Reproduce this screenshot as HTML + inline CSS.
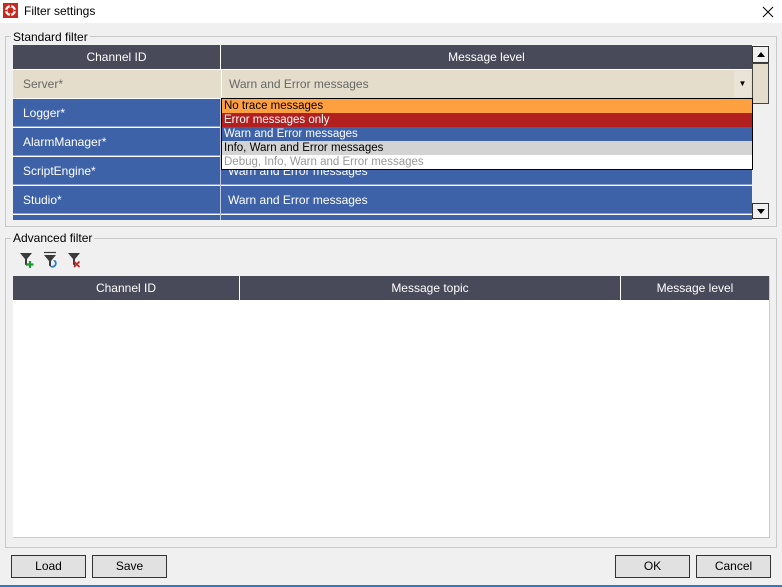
<!DOCTYPE html>
<html><head><meta charset="utf-8"><style>
*{margin:0;padding:0;box-sizing:border-box}
body{width:782px;height:587px;background:#f0f0f0;font-family:"Liberation Sans",sans-serif;font-size:12px;position:relative;overflow:hidden;color:#000}
.a{position:absolute}
.hd{background:#484a59;color:#fff;text-align:center;line-height:24px}
.row{position:absolute;left:13px;width:739px;height:28px;line-height:28px;color:#fff;background:#3e62a8;border-bottom:1px solid #8aa0cc}
.row span{position:absolute;padding-left:10px}
.btn{position:absolute;height:23px;background:#e1e1e1;border:1px solid #333;text-align:center;line-height:21px;font-size:12px}
.dd div{height:14px;line-height:14px;padding-left:2px;font-size:11.5px}
</style></head><body>
<div class="a" style="left:0;top:0;width:782px;height:23px;background:#fff"></div>
<svg class="a" style="left:3px;top:3px" width="15" height="15" viewBox="0 0 15 15"><rect width="15" height="15" fill="#c62a20"/><circle cx="7.5" cy="7.5" r="4.3" fill="none" stroke="#fff" stroke-width="2.2"/><path d="M7.5 1v3M7.5 11v3M1 7.5h3M11 7.5h3" stroke="#c62a20" stroke-width="1.6"/></svg>
<div class="a" style="left:24px;top:4px;font-size:12px">Filter settings</div>
<svg class="a" style="left:762px;top:6px" width="12" height="12" viewBox="0 0 12 12"><path d="M1 1l10 10M11 1L1 11" stroke="#000" stroke-width="1"/></svg>

<div class="a" style="left:5px;top:36px;width:772px;height:191px;border:1px solid #c8c8c8"></div>
<div class="a" style="left:11px;top:30px;background:#f0f0f0;padding:0 2px">Standard filter</div>
<div class="a" style="left:13px;top:45px;width:757px;height:175px;background:#fff"></div>
<div class="a hd" style="left:13px;top:45px;width:207px;height:24px">Channel ID</div>
<div class="a hd" style="left:221px;top:45px;width:531px;height:24px">Message level</div>
<div class="row" style="top:70px;background:#e5ddcb;color:#666;border-bottom:none"><span>Server*</span><span style="left:208px;border-left:1px solid #fff;height:28px;padding-left:7px">Warn and Error messages</span></div>
<div class="a" style="left:734px;top:71px;width:17px;height:26px;background:#eae4d6;text-align:center;font-size:8px;line-height:26px">▼</div>
<div class="row" style="top:99px"><span>Logger*</span></div>
<div class="row" style="top:128px"><span>AlarmManager*</span></div>
<div class="row" style="top:157px"><span>ScriptEngine*</span><span style="left:208px;padding-left:7px">Warn and Error messages</span></div>
<div class="row" style="top:186px"><span>Studio*</span><span style="left:208px;padding-left:7px">Warn and Error messages</span></div>
<div class="a" style="left:13px;top:215px;width:739px;height:5px;background:#3e62a8"></div>
<div class="a" style="left:220px;top:99px;width:1px;height:121px;background:#bcc8e0"></div>
<div class="a" style="left:752px;top:46px;width:18px;height:174px;background:#f0f0f0"></div>
<div class="a" style="left:752px;top:46px;width:17px;height:17px;border:1px solid #333;background:#f0f0f0"><svg class="a" style="left:4px;top:5px" width="8" height="5"><path d="M0 5L4 0L8 5z" fill="#000"/></svg></div>
<div class="a" style="left:752px;top:63px;width:17px;height:41px;border:1px solid #444;background:#e5ddcb"></div>
<div class="a" style="left:752px;top:203px;width:17px;height:16px;border:1px solid #333;background:#f0f0f0"><svg class="a" style="left:4px;top:5px" width="8" height="5"><path d="M0 0L4 5L8 0z" fill="#000"/></svg></div>
<div class="a dd" style="left:221px;top:98px;width:532px;height:72px;border:1px solid #000;background:#fff">
<div style="background:#ffa040">No trace messages</div>
<div style="background:#b11f1f;color:#fff">Error messages only</div>
<div style="background:#3e62a8;color:#fff">Warn and Error messages</div>
<div style="background:#d3d3d3">Info, Warn and Error messages</div>
<div style="color:#999">Debug, Info, Warn and Error messages</div>
</div>

<div class="a" style="left:5px;top:238px;width:772px;height:310px;border:1px solid #c8c8c8"></div>
<div class="a" style="left:11px;top:231px;background:#f0f0f0;padding:0 2px">Advanced filter</div>
<svg class="a" style="left:19px;top:251px" width="70" height="18" viewBox="0 0 70 18">
<path d="M1 2h12l-5 6v7l-2-1.5v-5.5z" fill="#3a3a3a"/><path d="M11 10v7M7.5 13.5h7" stroke="#1a9a2a" stroke-width="2.2"/>
<path d="M25 1.5h12" stroke="#3a3a3a" stroke-width="1.2"/><path d="M25 4h12l-5 6v6l-2-1.5v-4.5z" fill="#3a3a3a"/><path d="M32 15.5a3.5 3.5 0 0 0 4-5.5" stroke="#2a7fd0" stroke-width="1.8" fill="none"/><path d="M34 9l3 0.5-0.5 3z" fill="#2a7fd0"/>
<path d="M49 2h12l-5 6v7l-2-1.5v-5.5z" fill="#3a3a3a"/><path d="M55 10.5l5.5 5.5M60.5 10.5l-5.5 5.5" stroke="#d02020" stroke-width="1.7"/>
</svg>
<div class="a" style="left:13px;top:276px;width:757px;height:262px;background:#fff;border-right:1px solid #ccc;border-bottom:1px solid #ccc"></div>
<div class="a hd" style="left:13px;top:276px;width:226px;height:24px">Channel ID</div>
<div class="a hd" style="left:240px;top:276px;width:380px;height:24px">Message topic</div>
<div class="a hd" style="left:621px;top:276px;width:148px;height:24px">Message level</div>

<div class="btn" style="left:11px;top:555px;width:75px">Load</div>
<div class="btn" style="left:92px;top:555px;width:75px">Save</div>
<div class="btn" style="left:615px;top:555px;width:75px">OK</div>
<div class="btn" style="left:696px;top:555px;width:75px">Cancel</div>
<div class="a" style="left:0;top:585px;width:782px;height:2px;background:#2b7bd0"></div>
</body></html>
